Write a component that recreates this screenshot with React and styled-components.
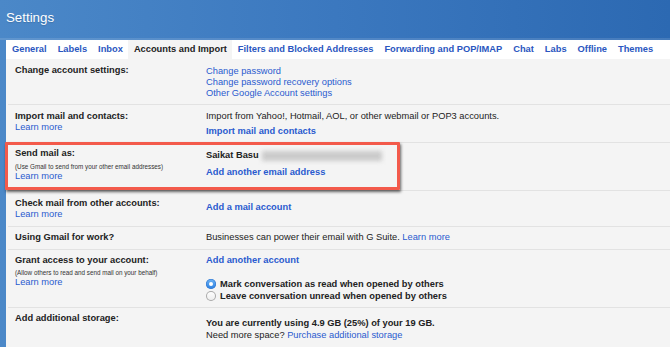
import React from 'react';
import styled, { createGlobalStyle } from 'styled-components';

const Global = createGlobalStyle`
  html, body { margin: 0; padding: 0; }
  body { font-family: "Liberation Sans", Arial, Helvetica, sans-serif; background: #3f7cc0; }
  * { box-sizing: border-box; }
`;

const Page = styled.div`
  width: 670px;
  height: 347px;
  overflow: hidden;
  background: linear-gradient(90deg, #4b88c8 0%, #3b78bf 50%, #2c69b2 100%);
  display: flex;
  flex-direction: column;
`;

const Header = styled.header`
  height: 40px;
  padding: 9px 0 0 6px;
  color: #fff;
  font-size: 13.3px;
  line-height: 18px;
  text-shadow: 0 1px 1px rgba(0, 0, 0, 0.15);
  border-bottom: 2px solid rgba(255, 255, 255, 0.12);
`;

const Panel = styled.div`
  flex: 1;
  margin-left: 6px;
  background: #f4f4f4;
  display: flex;
  flex-direction: column;
`;

const TabBar = styled.nav`
  display: flex;
  height: 19px;
  background: #fff;
  padding-left: 0.5px;
`;

const Tab = styled.span`
  padding: 0 5.5px;
  font-size: 9.3px;
  font-weight: bold;
  line-height: 18px;
  white-space: nowrap;
  color: ${(p) => (p.$active ? '#222' : '#2a56c0')};
  background: ${(p) => (p.$active ? '#f4f4f4' : 'transparent')};
`;

const Row = styled.section`
  position: relative;
  display: grid;
  grid-template-columns: 191px 1fr;
  margin-left: 2px;
  padding: ${(p) => p.$pt}px 0 ${(p) => p.$pb}px 7px;
  border-bottom: ${(p) => (p.$last ? 'none' : '1px solid #e2e2e2')};
  font-size: 9.3px;
  line-height: 11px;
  color: #222;
`;

const Label = styled.div`
  display: flex;
  flex-direction: column;
`;

const Title = styled.span`
  font-weight: bold;
`;

const Note = styled.span`
  margin-top: ${(p) => p.$mt}px;
  font-size: 6.3px;
  line-height: 9px;
  color: #333;
`;

const Value = styled.div`
  display: flex;
  flex-direction: column;
  align-items: flex-start;
  padding-top: ${(p) => p.$pt || 0}px;
  line-height: ${(p) => p.$lh || 11}px;
`;

const Link = styled.a`
  color: #2a5bcf;
  text-decoration: none;
  font-weight: ${(p) => (p.$bold ? 'bold' : 'normal')};
  margin-top: ${(p) => p.$mt || 0}px;
`;

const Text = styled.span`
  font-weight: ${(p) => (p.$bold ? 'bold' : 'normal')};
`;

const NameLine = styled.div`
  display: flex;
  align-items: center;
`;

const Blurred = styled.span`
  display: inline-block;
  width: 120px;
  height: 10px;
  margin-left: 3px;
  background: #cbcbcb;
  filter: blur(2px);
`;

const Radios = styled.div`
  display: flex;
  flex-direction: column;
  margin-top: 12px;
  line-height: 12px;
`;

const RadioRow = styled.label`
  display: flex;
  align-items: center;
  gap: 4px;
  font-weight: bold;
`;

const RadioDot = styled.span`
  position: relative;
  width: 10px;
  height: 10px;
  border-radius: 50%;
  flex: none;
  ${(p) =>
    p.$checked
      ? `background: linear-gradient(#6db3f5, #2b7fe0); box-shadow: inset 0 0 0 0.5px #2a6fcc;`
      : `background: linear-gradient(#ffffff, #ececec); box-shadow: inset 0 0 0 1px #a9a9a9;`}
  &::after {
    content: '';
    display: ${(p) => (p.$checked ? 'block' : 'none')};
    position: absolute;
    left: 3px;
    top: 3px;
    width: 4px;
    height: 4px;
    border-radius: 50%;
    background: #fff;
  }
`;

const Annotation = styled.div`
  position: absolute;
  left: -3px;
  top: -1px;
  width: 395px;
  height: 48px;
  border: 3px solid #f35a4b;
  border-radius: 1px;
  box-shadow: 1px 2px 3px rgba(0, 0, 0, 0.6);
  pointer-events: none;
`;

const tabs = [
  'General',
  'Labels',
  'Inbox',
  'Accounts and Import',
  'Filters and Blocked Addresses',
  'Forwarding and POP/IMAP',
  'Chat',
  'Labs',
  'Offline',
  'Themes',
];

export default function App() {
  return (
    <>
      <Global />
      <Page>
        <Header>Settings</Header>
        <Panel>
          <TabBar>
            {tabs.map((t) => (
              <Tab key={t} $active={t === 'Accounts and Import'}>
                {t}
              </Tab>
            ))}
          </TabBar>

          <Row $pt={6} $pb={5}>
            <Label>
              <Title>Change account settings:</Title>
            </Label>
            <Value $pt={1}>
              <Link>Change password</Link>
              <Link>Change password recovery options</Link>
              <Link>Other Google Account settings</Link>
            </Value>
          </Row>

          <Row $pt={6} $pb={5}>
            <Label>
              <Title>Import mail and contacts:</Title>
              <Link>Learn more</Link>
            </Label>
            <Value>
              <Text>Import from Yahoo!, Hotmail, AOL, or other webmail or POP3 accounts.</Text>
              <Link $bold $mt={4}>Import mail and contacts</Link>
            </Value>
          </Row>

          <Row $pt={5} $pb={8}>
            <Label>
              <Title>Send mail as:</Title>
              <Note $mt={3}>(Use Gmail to send from your other email addresses)</Note>
              <Link>Learn more</Link>
            </Label>
            <Value $pt={2}>
              <NameLine>
                <Text $bold>Saikat Basu</Text>
                <Blurred />
              </NameLine>
              <Link $bold $mt={6}>Add another email address</Link>
            </Value>
            <Annotation />
          </Row>

          <Row $pt={7} $pb={6}>
            <Label>
              <Title>Check mail from other accounts:</Title>
              <Link>Learn more</Link>
            </Label>
            <Value $pt={4}>
              <Link $bold>Add a mail account</Link>
            </Value>
          </Row>

          <Row $pt={5} $pb={6}>
            <Label>
              <Title>Using Gmail for work?</Title>
            </Label>
            <Value>
              <Text>
                Businesses can power their email with G Suite. <Link>Learn more</Link>
              </Text>
            </Value>
          </Row>

          <Row $pt={5} $pb={5}>
            <Label>
              <Title>Grant access to your account:</Title>
              <Note $mt={2}>(Allow others to read and send mail on your behalf)</Note>
              <Link>Learn more</Link>
            </Label>
            <Value>
              <Link $bold>Add another account</Link>
              <Radios>
                <RadioRow>
                  <RadioDot $checked />
                  Mark conversation as read when opened by others
                </RadioRow>
                <RadioRow>
                  <RadioDot />
                  Leave conversation unread when opened by others
                </RadioRow>
              </Radios>
            </Value>
          </Row>

          <Row $pt={5} $pb={5} $last>
            <Label>
              <Title>Add additional storage:</Title>
            </Label>
            <Value $pt={4} $lh={12}>
              <Text $bold>You are currently using 4.9 GB (25%) of your 19 GB.</Text>
              <Text>
                Need more space? <Link>Purchase additional storage</Link>
              </Text>
            </Value>
          </Row>
        </Panel>
      </Page>
    </>
  );
}
